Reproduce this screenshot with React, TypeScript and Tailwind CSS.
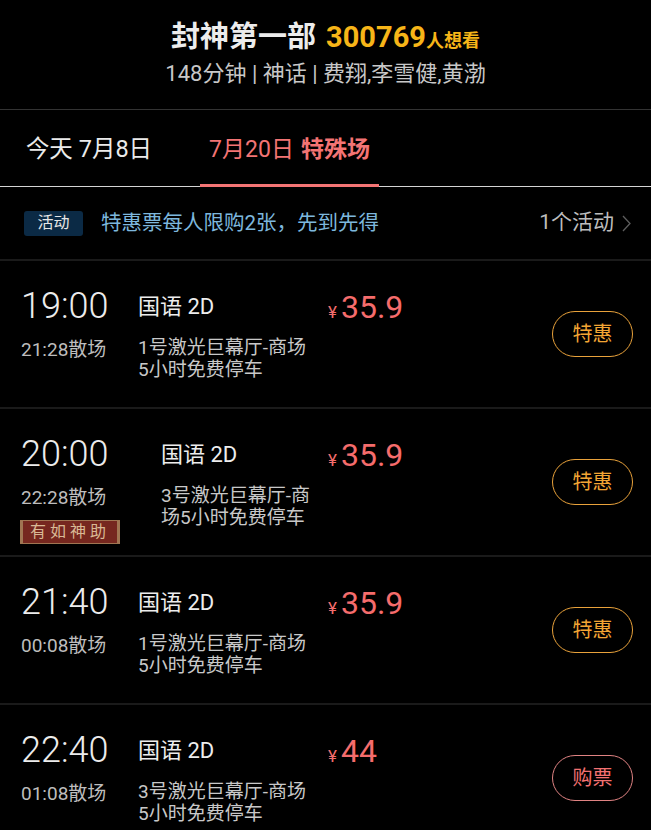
const FONT = 'font-["Roboto","Noto_Sans_CJK_SC",sans-serif]';

type Show = {
  start: string;
  end: string;
  lang: string;
  hall: string;
  price: string;
  action: '特惠' | '购票';
  badge?: boolean;
};

const shows: Show[] = [
  { start: '19:00', end: '21:28散场', lang: '国语 2D', hall: '1号激光巨幕厅-商场5小时免费停车', price: '35.9', action: '特惠' },
  { start: '20:00', end: '22:28散场', lang: '国语 2D', hall: '3号激光巨幕厅-商场5小时免费停车', price: '35.9', action: '特惠', badge: true },
  { start: '21:40', end: '00:08散场', lang: '国语 2D', hall: '1号激光巨幕厅-商场5小时免费停车', price: '35.9', action: '特惠' },
  { start: '22:40', end: '01:08散场', lang: '国语 2D', hall: '3号激光巨幕厅-商场5小时免费停车', price: '44', action: '购票' },
];

function ShowRow({ show }: { show: Show }) {
  return (
    <div className="flex h-[148px] border-b-2 border-[#1a1a1a] pl-[21px] pr-[18px]">
      <div className={show.badge ? 'w-[140px] shrink-0 pt-[25px]' : 'w-[117px] shrink-0 pt-[25px]'}>
        <div className="text-[36px] leading-[40px] font-light text-[#ececec]">{show.start}</div>
        <div className="mt-[12px] text-[19px] leading-[24px] text-[#bdbdbd]">{show.end}</div>
        {show.badge && (
          <div className="mt-[10px] -ml-[1px] flex h-[24px] w-[100px] items-center justify-center border border-x-[3px] border-[#a07552] bg-[#76271f] font-['Liberation_Serif','Noto_Sans_CJK_SC',serif] text-[16px] tracking-[4px] text-[#d9b995]">
            有如神助
          </div>
        )}
      </div>
      <div className="min-w-0 flex-1 pt-[32px] pr-[15px]">
        <div className="text-[22px] leading-[28px] text-[#ededed]">{show.lang}</div>
        <div className="mt-[16px] text-[19px] leading-[22px] text-[#c8c8c8]">{show.hall}</div>
      </div>
      <div className="flex w-[224px] shrink-0 items-baseline pt-[28px]">
        <span className="mr-[4px] text-[17px] text-[#f36d6d]">¥</span>
        <span className="text-[32px] leading-[36px] text-[#f56c6c]">{show.price}</span>
      </div>
      <div className="flex items-center">
        <button
          className={
            show.action === '特惠'
              ? 'flex h-[46px] w-[81px] items-center justify-center rounded-full border-[1.5px] border-[#e9a23b] text-[20px] text-[#f2a534]'
              : 'flex h-[46px] w-[81px] items-center justify-center rounded-full border-[1.5px] border-[#e08383] text-[20px] text-[#f37171]'
          }
        >
          {show.action}
        </button>
      </div>
    </div>
  );
}

export default function App() {
  return (
    <div className={`${FONT} min-h-screen w-[651px] overflow-hidden bg-black`}>
      {/* movie header */}
      <div className="flex h-[110px] flex-col items-center border-b border-[#333] pt-[19px]">
        <div className="flex items-baseline font-bold leading-[36px]">
          <span className="text-[29px] text-[#ececec]">封神第一部</span>
          <span className="ml-[10px] text-[29px] text-[#f7b518]">300769</span>
          <span className="text-[18px] text-[#f7b518]">人想看</span>
        </div>
        <div className="mt-[1px] text-[22px] leading-[28px] text-[#c8c8c8]">148分钟 | 神话 | 费翔,李雪健,黄渤</div>
      </div>

      {/* date tabs */}
      <div className="flex h-[77px] border-b border-[#d4d4d4] pt-[4px]">
        <div className="flex w-[178px] items-center justify-center text-[23.5px] text-[#ebebeb]">今天 7月8日</div>
        <div className="relative ml-[22px] flex w-[179px] items-center justify-center text-[23px] text-[#f37474]">
          7月20日<span className="ml-[7px] font-bold">特殊场</span>
          <div className="absolute bottom-[-1px] left-0 h-[3px] w-full bg-[#f37474]" />
        </div>
      </div>

      {/* activity bar */}
      <div className="flex h-[74px] items-center border-b-2 border-[#1a1a1a] pl-[24px] pr-[20px]">
        <span className="flex h-[25px] w-[59px] items-center justify-center rounded-[3px] bg-[#0b2a45] text-[16px] text-[#e6e6e6]">活动</span>
        <span className="ml-[18px] text-[20.5px] text-[#7db7dd]">特惠票每人限购2张，先到先得</span>
        <span className="ml-auto text-[21px] text-[#bdbdbd]">1个活动</span>
        <svg className="ml-[8px]" width="9" height="17" viewBox="0 0 9 17" fill="none">
          <path d="M1 1l7 7.5L1 16" stroke="#5e5e5e" strokeWidth="1.3" />
        </svg>
      </div>

      {shows.map((s) => (
        <ShowRow key={s.start} show={s} />
      ))}
    </div>
  );
}
